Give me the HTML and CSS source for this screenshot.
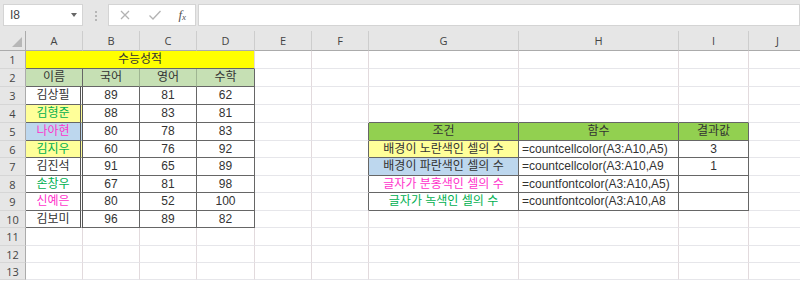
FILE: index.html
```html
<!DOCTYPE html>
<html lang="ko">
<head>
  <meta charset="UTF-8">
  <title>수능성적</title>
  <link rel="stylesheet" href="styles.css">
</head>
<body>

  <!-- formula bar -->
  <div class="formula-bar">
    <div class="name-box"><span>I8</span><span class="drop"></span></div>
    <div class="grip">
      <svg width="4" height="12" viewBox="0 0 4 12"><circle cx="2" cy="2" r="1" /><circle cx="2" cy="6" r="1" /><circle cx="2" cy="10" r="1" /></svg>
    </div>
    <div class="fx-box">
      <svg class="icon" width="12" height="12" viewBox="0 0 12 12"><path d="M2 2 L10 10 M10 2 L2 10" /></svg>
      <svg class="icon" width="14" height="12" viewBox="0 0 14 12"><path d="M1.5 6.5 L5 10 L12.5 2" /></svg>
      <span class="fx"><i>f</i><sub>x</sub></span>
    </div>
    <div class="formula-input"></div>
  </div>

  <!-- sheet -->
  <div class="sheet">
    <div class="corner"><span class="tri"></span></div>
    <div class="ch">A</div><div class="ch">B</div><div class="ch">C</div><div class="ch">D</div><div class="ch">E</div><div class="ch">F</div><div class="ch">G</div><div class="ch">H</div><div class="ch">I</div><div class="ch">J</div>

    <div class="rh">1</div>
    <div class="c m title db">수능성적</div><div class="c"></div><div class="c"></div><div class="c"></div><div class="c"></div><div class="c"></div><div class="c"></div>

    <div class="rh">2</div>
    <div class="c m head db dr">이름</div><div class="c m head db soft">국어</div><div class="c m head db soft">영어</div><div class="c m head db dr">수학</div>
    <div class="c"></div><div class="c"></div><div class="c"></div><div class="c"></div><div class="c"></div><div class="c"></div>

    <div class="rh">3</div>
    <div class="c m db dbl">김상필</div><div class="c m db dr">89</div><div class="c m db dr">81</div><div class="c m db dr">62</div>
    <div class="c"></div><div class="c"></div><div class="c"></div><div class="c"></div><div class="c"></div><div class="c"></div>

    <div class="rh">4</div>
    <div class="c m db dbl bg-yellow fg-green">김형준</div><div class="c m db dr">88</div><div class="c m db dr">83</div><div class="c m db dr">81</div>
    <div class="c"></div><div class="c"></div><div class="c db"></div><div class="c db"></div><div class="c db"></div><div class="c"></div>

    <div class="rh">5</div>
    <div class="c m db dbl bg-blue fg-pink">나아현</div><div class="c m db dr">80</div><div class="c m db dr">78</div><div class="c m db dr">83</div>
    <div class="c"></div><div class="c dr"></div><div class="c m db dr green">조건</div><div class="c m db dr green">함수</div><div class="c m db dr green">결과값</div><div class="c"></div>

    <div class="rh">6</div>
    <div class="c m db dbl bg-yellow fg-green">김지우</div><div class="c m db dr">60</div><div class="c m db dr">76</div><div class="c m db dr">92</div>
    <div class="c"></div><div class="c dr"></div><div class="c m db dr bg-yellow">배경이 노란색인 셀의 수</div><div class="c db dr">=countcellcolor(A3:A10,A5)</div><div class="c m db dr">3</div><div class="c"></div>

    <div class="rh">7</div>
    <div class="c m db dbl">김진석</div><div class="c m db dr">91</div><div class="c m db dr">65</div><div class="c m db dr">89</div>
    <div class="c"></div><div class="c dr"></div><div class="c m db dr bg-blue">배경이 파란색인 셀의 수</div><div class="c db dr">=countcellcolor(A3:A10,A9</div><div class="c m db dr">1</div><div class="c"></div>

    <div class="rh">8</div>
    <div class="c m db dbl fg-green">손창우</div><div class="c m db dr">67</div><div class="c m db dr">81</div><div class="c m db dr">98</div>
    <div class="c"></div><div class="c dr"></div><div class="c m db dr fg-pink">글자가 분홍색인 셀의 수</div><div class="c db dr">=countfontcolor(A3:A10,A5)</div><div class="c m db dr"></div><div class="c"></div>

    <div class="rh">9</div>
    <div class="c m db dbl fg-pink">신예은</div><div class="c m db dr">80</div><div class="c m db dr">52</div><div class="c m db dr">100</div>
    <div class="c"></div><div class="c dr"></div><div class="c m db dr fg-green">글자가 녹색인 셀의 수</div><div class="c db dr">=countfontcolor(A3:A10,A8</div><div class="c m db dr"></div><div class="c"></div>

    <div class="rh">10</div>
    <div class="c m db dbl">김보미</div><div class="c m db dr">96</div><div class="c m db dr">89</div><div class="c m db dr">82</div>
    <div class="c"></div><div class="c"></div><div class="c"></div><div class="c"></div><div class="c"></div><div class="c"></div>

    <div class="rh">11</div>
    <div class="c"></div><div class="c"></div><div class="c"></div><div class="c"></div><div class="c"></div><div class="c"></div><div class="c"></div><div class="c"></div><div class="c"></div><div class="c"></div>

    <div class="rh">12</div>
    <div class="c"></div><div class="c"></div><div class="c"></div><div class="c"></div><div class="c"></div><div class="c"></div><div class="c"></div><div class="c"></div><div class="c"></div><div class="c"></div>

    <div class="rh">13</div>
    <div class="c"></div><div class="c"></div><div class="c"></div><div class="c"></div><div class="c"></div><div class="c"></div><div class="c"></div><div class="c"></div><div class="c"></div><div class="c"></div>
  </div>

</body>
</html>
```

FILE: styles.css
```css
* {
  box-sizing: border-box;
}
body {
  margin: 0;
  width: 800px;
  height: 282px;
  overflow: hidden;
  background-color: #fff;
  color: #333;
  font-family: "Liberation Sans", "Noto Sans CJK KR", sans-serif;
  font-size: 12px;
}

/* formula bar */
.formula-bar {
  display: flex;
  align-items: flex-start;
  height: 31px;
  padding: 4px 0 0 3px;
  background-color: #e6e6e6;
}
.name-box {
  display: flex;
  align-items: center;
  justify-content: space-between;
  width: 80px;
  height: 22px;
  padding: 0 5px 0 6px;
  background-color: #fff;
  border: 1px solid #d4d4d4;
  font-size: 12px;
  color: #444;
}
.drop {
  width: 0;
  height: 0;
  border-left: 3px solid transparent;
  border-right: 3px solid transparent;
  border-top: 4px solid #666;
}
.grip {
  display: flex;
  justify-content: center;
  width: 25px;
  padding-top: 6px;
  fill: #a6a6a6;
}
.fx-box {
  display: flex;
  align-items: center;
  justify-content: space-between;
  width: 88px;
  height: 22px;
  margin-right: 2px;
  padding: 0 9px 0 10px;
  background-color: #fff;
  border: 1px solid #d4d4d4;
}
.icon {
  fill: none;
  stroke: #b3b3b3;
  stroke-width: 1.3;
}
.fx {
  font-family: "Liberation Serif", serif;
  font-size: 13px;
  color: #555;
}
.fx sub {
  font-size: 9px;
  font-style: italic;
  vertical-align: -1px;
}
.formula-input {
  flex: 1;
  height: 22px;
  background-color: #fff;
  border: 1px solid #d4d4d4;
}

/* sheet grid */
.sheet {
  display: grid;
  grid-template-columns: 26px 57px 57px 57px 58px 57px 57px 150px 160px 70px 58px;
  grid-template-rows: 20px 18px 18px 18px 18px 18px 17px 18px 17px 18px 17px 18px 17px 17px;
}
.corner {
  position: relative;
  background-color: #e6e6e6;
  border-right: 1px solid #ababab;
  border-bottom: 1px solid #ababab;
}
.tri {
  position: absolute;
  right: 3px;
  bottom: 3px;
  width: 0;
  height: 0;
  border-left: 10px solid transparent;
  border-bottom: 10px solid #b7b7b7;
}
.ch {
  text-align: center;
  line-height: 19px;
  font-family: "Open Sans", sans-serif;
  font-size: 11px;
  color: #444;
  background-color: #e6e6e6;
  border-right: 1px solid #cdcdcd;
  border-bottom: 1px solid #ababab;
}
.rh {
  text-align: center;
  line-height: 17px;
  font-family: "Open Sans", sans-serif;
  font-size: 11px;
  color: #444;
  background-color: #e6e6e6;
  border-right: 1px solid #ababab;
  border-bottom: 1px solid #d6d6d6;
}
.c {
  padding: 0 3px;
  line-height: 17px;
  white-space: nowrap;
  overflow: hidden;
  border-right: 1px solid #e2dadd;
  border-bottom: 1px solid #e6e6ea;
}
.m {
  text-align: center;
}

/* borders */
.db {
  border-bottom-color: #666;
}
.dr {
  border-right-color: #666;
}
.soft {
  border-right-color: #9fb592;
}
.dbl {
  border-right: 3px double #555;
}

/* fills and fonts */
.title {
  grid-column: span 4;
  background-color: #ffff00;
}
.head {
  background-color: #c6e0b4;
}
.green {
  background-color: #92d050;
}
.bg-yellow {
  background-color: #ffff99;
}
.bg-blue {
  background-color: #bdd7ee;
}
.fg-green {
  color: #00b050;
}
.fg-pink {
  color: #ff33cc;
}
```
